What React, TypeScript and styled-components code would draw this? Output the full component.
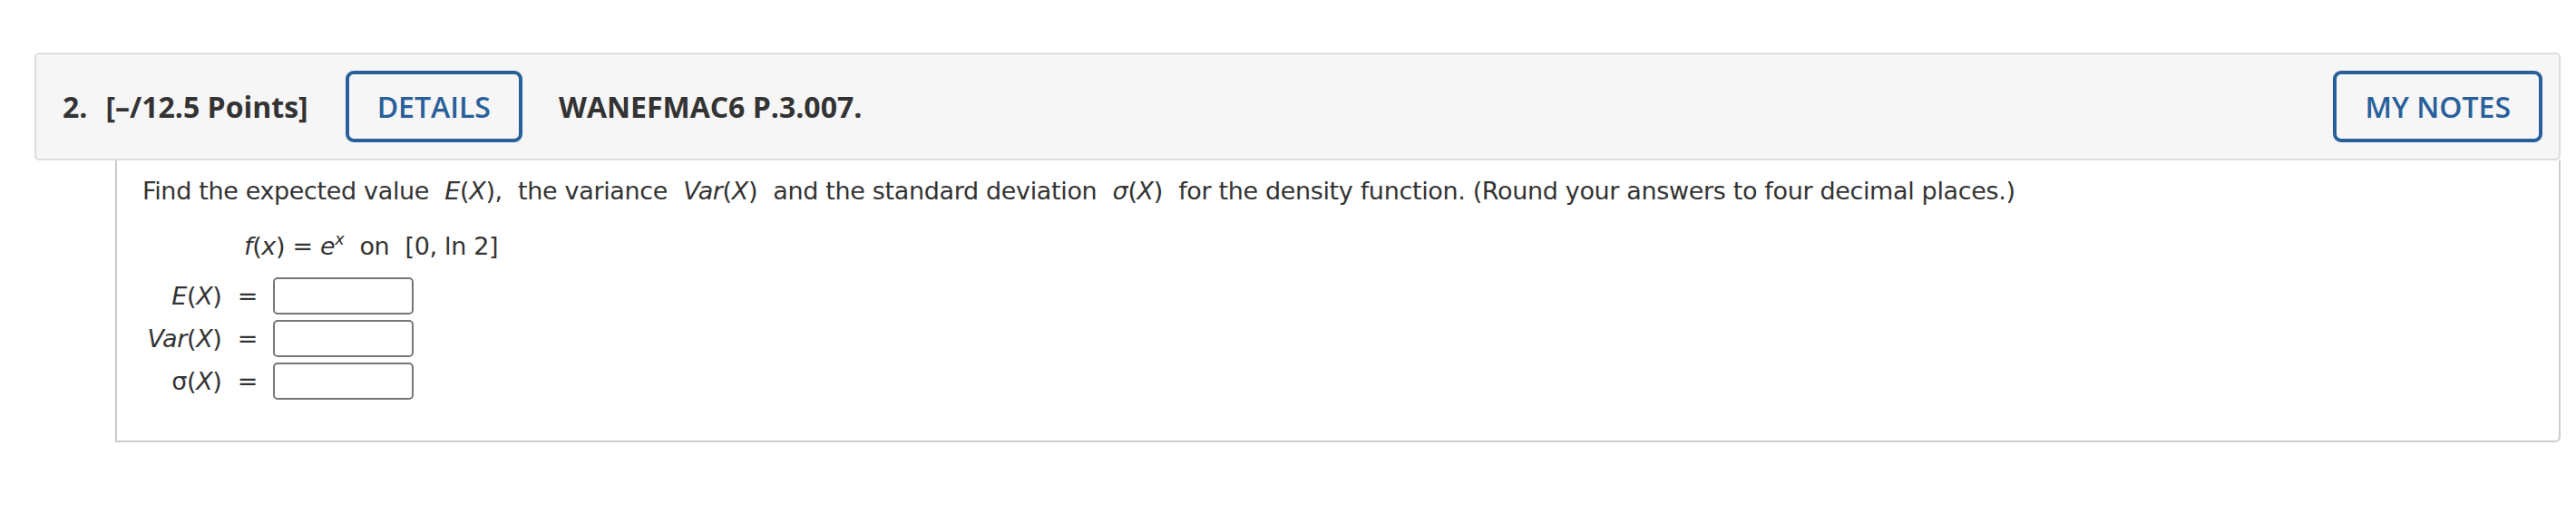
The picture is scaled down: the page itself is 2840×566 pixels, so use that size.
import React from 'react'
import styled, { createGlobalStyle } from 'styled-components'

const GlobalStyle = createGlobalStyle`
	html, body {
		margin: 0;
		padding: 0;
		background: #fff;
	}
	body {
		font-family: "DejaVu Sans", Verdana, sans-serif;
		color: #333;
	}
`

const Page = styled.div`
	padding: 58px 17px 0 38px;
`

const Header = styled.div`
	display: flex;
	align-items: center;
	background: #f6f6f6;
	border: 2px solid #ddd;
	border-radius: 5px;
	padding: 18px 18px 18px 29px;
	font-family: "Open Sans", "Noto Sans", sans-serif;
	color: #333;
`

const Number = styled.span`
	font-size: 32px;
	font-weight: 700;
	margin-right: 20px;
`

const Points = styled.span`
	font-size: 32px;
	font-weight: 700;
`

const Code = styled.span`
	font-size: 32px;
	font-weight: 700;
	margin-left: 40px;
`

const Spacer = styled.div`
	flex: 1;
`

const OutlineButton = styled.button<{ $first?: boolean }>`
	box-sizing: border-box;
	height: 79px;
	padding: 0 31px;
	margin-left: ${(p) => (p.$first ? '41px' : '0')};
	background: transparent;
	border: 4px solid #28609a;
	border-radius: 9px;
	color: #28609a;
	font-family: "Open Sans", "Noto Sans", sans-serif;
	font-size: 32px;
	font-weight: 600;
	line-height: 1;
	cursor: pointer;
`

const Body = styled.div`
	margin-left: 89px;
	border: 2px solid #ccc;
	border-top: none;
	border-radius: 0 0 6px 0;
	padding: 14px 28px 45px 28px;
	font-size: 27px;
	letter-spacing: -0.35px;
	line-height: 40px;
`

const Prompt = styled.p`
	margin: 0;
`

const Gap = styled.span`
	display: inline-block;
	width: 9px;
`

const I = styled.i`
	font-style: italic;
`

const Formula = styled.div`
	margin: 21px 0 0 112px;
`

const Sup = styled.sup`
	font-size: 0.65em;
	font-style: italic;
	vertical-align: 0.6em;
	line-height: 0;
`

const Answers = styled.div`
	display: grid;
	grid-template-columns: 127px auto;
	column-gap: 17px;
	row-gap: 6px;
	margin-top: 14px;
	align-items: center;
	justify-content: start;
`

const Label = styled.div`
	text-align: right;
	white-space: nowrap;
`

const AnswerInput = styled.input`
	box-sizing: border-box;
	width: 155px;
	height: 41px;
	border: 2px solid #777;
	border-radius: 5px;
	background: #fff;
	margin: 0;
	padding: 0 6px;
	font: inherit;
`

const rows: { label: React.ReactNode }[] = [
	{ label: <><I>E</I>(<I>X</I>)</> },
	{ label: <><I>Var</I>(<I>X</I>)</> },
	{ label: <>σ(<I>X</I>)</> },
]

export default function App() {
	return (
		<>
			<GlobalStyle />
			<Page>
				<Header>
					<Number>2.</Number>
					<Points>[–/12.5 Points]</Points>
					<OutlineButton $first>DETAILS</OutlineButton>
					<Code>WANEFMAC6 P.3.007.</Code>
					<Spacer />
					<OutlineButton>MY NOTES</OutlineButton>
				</Header>
				<Body>
					<Prompt>
						Find the expected value<Gap /> <I>E</I>(<I>X</I>),<Gap /> the variance<Gap /> <I>Var</I>(<I>X</I>)<Gap /> and the standard deviation<Gap /> <I>σ</I>(<I>X</I>)<Gap /> for the density function. (Round your answers to four decimal places.)
					</Prompt>
					<Formula>
						<I>f</I>(<I>x</I>) = <I>e</I><Sup>x</Sup><Gap /> on<Gap /> [0, ln 2]
					</Formula>
					<Answers>
						{rows.map((r, i) => (
							<React.Fragment key={i}>
								<Label>{r.label}<Gap /> =</Label>
								<AnswerInput type="text" />
							</React.Fragment>
						))}
					</Answers>
				</Body>
			</Page>
		</>
	)
}
